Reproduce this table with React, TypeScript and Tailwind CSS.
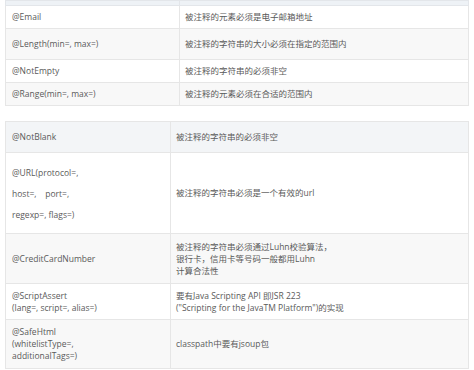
const font = { fontFamily: '"Open Sans", "Noto Sans CJK SC", sans-serif' };

type Row = { name: string[]; desc: string[]; h: number; bg: string; lh?: string };

const first: Row[] = [
  { name: ["@Email"], desc: ["被注释的元素必须是电子邮箱地址"], h: 23, bg: "bg-white" },
  { name: ["@Length(min=, max=)"], desc: ["被注释的字符串的大小必须在指定的范围内"], h: 31, bg: "bg-[#f8f8f8]" },
  { name: ["@NotEmpty"], desc: ["被注释的字符串的必须非空"], h: 23, bg: "bg-white" },
  { name: ["@Range(min=, max=)"], desc: ["被注释的元素必须在合适的范围内"], h: 23, bg: "bg-[#f8f8f8]" },
];

const second: Row[] = [
  { name: ["@NotBlank"], desc: ["被注释的字符串的必须非空"], h: 31, bg: "bg-[#f3f5f7]" },
  {
    name: ["@URL(protocol=,", "host=,\u00a0\u00a0\u00a0\u00a0port=,", "regexp=, flags=)"],
    desc: ["被注释的字符串必须是一个有效的url"],
    h: 81,
    bg: "bg-white",
    lh: "leading-[21px]",
  },
  {
    name: ["@CreditCardNumber"],
    desc: ["被注释的字符串必须通过Luhn校验算法，", "银行卡，信用卡等号码一般都用Luhn", "计算合法性"],
    h: 50,
    bg: "bg-[#f8f8f8]",
  },
  {
    name: ["@ScriptAssert", "(lang=, script=, alias=)"],
    desc: ["要有Java Scripting API 即JSR 223", "(\"Scripting for the JavaTM Platform\")的实现"],
    h: 36,
    bg: "bg-white",
  },
  {
    name: ["@SafeHtml", "(whitelistType=,", "additionalTags=)"],
    desc: ["classpath中要有jsoup包"],
    h: 49,
    bg: "bg-[#f8f8f8]",
  },
];

function Table({ rows, col, head }: { rows: Row[]; col: number; head?: boolean }) {
  return (
    <table className="w-[464px] table-fixed border-collapse text-[8.5px] text-[#5a5a5a]" style={font}>
      <colgroup>
        <col style={{ width: col }} />
        <col />
      </colgroup>
      <tbody>
        {head && (
          <tr className="h-[5px] bg-[#eef2f6]">
            <td className="border border-[#e3e6ea] p-0" />
            <td className="border border-[#e3e6ea] p-0" />
          </tr>
        )}
        {rows.map((r, i) => (
          <tr key={i} className={r.bg} style={{ height: r.h }}>
            <td className={`border border-[#e6e6e6] pl-[6px] align-middle ${r.lh ?? "leading-[12px]"}`}>
              {r.name.map((l, j) => (
                <div key={j} className="whitespace-nowrap">{l}</div>
              ))}
            </td>
            <td className="border border-[#e6e6e6] pl-[5px] align-middle leading-[12px]">
              {r.desc.map((l, j) => (
                <div key={j} className="whitespace-nowrap">{l}</div>
              ))}
            </td>
          </tr>
        ))}
      </tbody>
    </table>
  );
}

export default function App() {
  return (
    <div className="h-[370px] w-[474px] overflow-hidden bg-white pl-[5px]">
      <Table rows={first} col={174} head />
      <div className="h-[15px]" />
      <Table rows={second} col={165} />
    </div>
  );
}
